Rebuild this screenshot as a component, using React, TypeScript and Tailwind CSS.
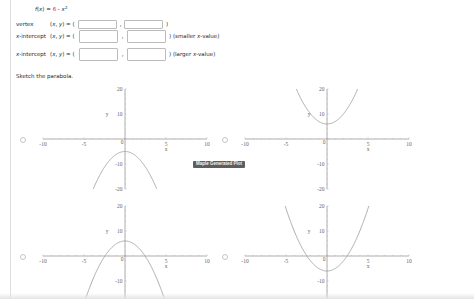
import { useId } from 'react';

type Fn = (x: number) => number;

const PLOTS: Fn[] = [
  x => -x * x - 5,
  x => x * x + 6,
  x => 6 - x * x,
  x => x * x - 6,
];

// svg-local origin and scale (8.2px per x unit, 2.5px per y unit)
const OX = 89;
const OY = 55;
const SX = 8.2;
const SY = 2.5;

function Plot({ f }: { f: Fn }) {
  const id = useId().replace(/:/g, '');
  const pts: string[] = [];
  for (let i = 0; i <= 400; i++) {
    const x = -10 + i * 0.05;
    pts.push(`${(OX + SX * x).toFixed(2)},${(OY - SY * f(x)).toFixed(2)}`);
  }
  const xt = Array.from({ length: 21 }, (_, i) => i - 10);
  const yt = Array.from({ length: 21 }, (_, i) => i * 2 - 20);
  const lbl = { fontFamily: '"Liberation Serif", serif', fontSize: 5.5, fill: '#666' };

  return (
    <svg width={178} height={117} viewBox="0 0 178 117">
      <defs>
        <clipPath id={`c${id}`}>
          <rect x={OX - 10 * SX} y={OY - 20 * SY} width={20 * SX} height={40 * SY} />
        </clipPath>
      </defs>
      <line x1={OX - 10 * SX} y1={OY} x2={OX + 10 * SX} y2={OY} stroke="#999" strokeWidth={0.8} />
      <line x1={OX} y1={OY - 20 * SY} x2={OX} y2={OY + 20 * SY} stroke="#999" strokeWidth={0.8} />
      {xt.map(t => (
        <line key={`x${t}`} x1={OX + SX * t} y1={OY} x2={OX + SX * t} y2={OY - (t % 5 === 0 ? 1.6 : 0.9)} stroke="#aaa" strokeWidth={0.5} />
      ))}
      {yt.map(t => (
        <line key={`y${t}`} x1={OX} y1={OY - SY * t} x2={OX + (t % 10 === 0 ? 1.6 : 0.9)} y2={OY - SY * t} stroke="#aaa" strokeWidth={0.5} />
      ))}
      <polyline points={pts.join(' ')} fill="none" stroke="#999" strokeWidth={0.8} clipPath={`url(#c${id})`} />
      {[-10, -5, 5, 10].map(t => (
        <text key={`xl${t}`} x={OX + SX * t} y={OY + 6.5} textAnchor="middle" style={lbl}>{t}</text>
      ))}
      <text x={OX - 3} y={OY + 4.5} textAnchor="middle" style={lbl}>0</text>
      <text x={OX + SX * 5} y={OY + 11.5} textAnchor="middle" style={lbl}>x</text>
      {[20, 10, -10, -20].map(t => (
        <text key={`yl${t}`} x={OX - 2.5} y={OY - SY * t + 2} textAnchor="end" style={lbl}>{t}</text>
      ))}
      <text x={OX - 18} y={OY - SY * 10 + 2} textAnchor="middle" style={lbl}>y</text>
    </svg>
  );
}

function Box({ h }: { h: string }) {
  return <span className={`inline-block w-[39px] ${h} border border-[#bbb] bg-white rounded-[1px]`} />;
}

export default function App() {
  return (
    <div className="relative h-[299px] w-[474px] overflow-hidden bg-white pl-[10px] text-[#2a2a2a]" style={{ fontFamily: '"DejaVu Sans", Verdana, sans-serif' }}>
      <div className="h-full border-l border-[#ddd]">
        <div className="pl-[5px] text-[5.5px]">
          <div className="pt-[5px] pl-[19px] h-[13px] leading-[8px]">
            <i>f</i>(<i>x</i>) = <span className="text-[#e0242a]">6</span> - <i>x</i><sup className="text-[4px]">2</sup>
          </div>
          <div className="mt-[6px] flex h-[10px] items-center">
            <span className="w-[34px]">vertex</span>
            <span className="w-[28px]">(<i>x</i>, <i>y</i>) = (</span>
            <Box h="h-[9px]" />
            <span className="w-[7px] text-center">,</span>
            <Box h="h-[9px]" />
            <span className="ml-[3px]">)</span>
          </div>
          {['smaller', 'larger'].map((w, i) => (
            <div key={w} className={`${i === 0 ? 'mt-[1px]' : 'mt-[5px]'} flex h-[13px] items-center`}>
              <span className="w-[34px]"><i>x</i>-intercept</span>
              <span className="w-[29px]">(<i>x</i>, <i>y</i>) = (</span>
              <Box h="h-[13px]" />
              <span className="w-[9px] text-center">,</span>
              <Box h="h-[13px]" />
              <span className="ml-[3px]">) ({w} <i>x</i>-value)</span>
            </div>
          ))}
          <div className="mt-[11px] h-[8px] leading-[8px]">Sketch the parabola.</div>
        </div>

        <div className="mt-[4px] grid grid-cols-[202px_202px] pl-[3px]">
          {PLOTS.map((f, i) => (
            <div key={i} className="flex items-start">
              <span className="ml-[6px] mt-[53px] h-[6px] w-[6px] rounded-full border border-[#c4c4c4] bg-white" />
              <div className="ml-[10px]">
                <Plot f={f} />
              </div>
            </div>
          ))}
        </div>
      </div>

      <div className="absolute left-[193px] top-[161px] flex h-[7px] w-[52px] items-center justify-center rounded-[1px] bg-[#5e5e5e] text-[4.5px] font-bold leading-none text-[#f4f4f4]" style={{ fontFamily: '"Liberation Sans", Arial, sans-serif' }}>
        Maple Generated Plot
      </div>
      <div className="absolute inset-x-0 bottom-0 h-[6px] bg-gradient-to-b from-transparent to-[#e4e4e4]" />
    </div>
  );
}
